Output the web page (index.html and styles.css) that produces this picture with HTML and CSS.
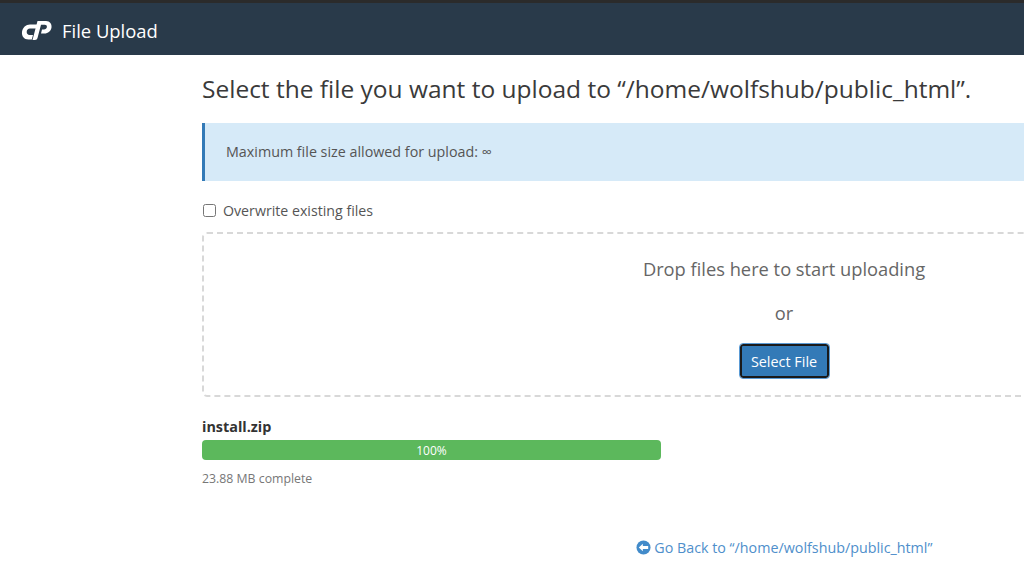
FILE: index.html
```html
<!DOCTYPE html>
<html lang="en">
<head>
  <meta charset="UTF-8">
  <title>File Upload</title>
  <link rel="stylesheet" href="styles.css">
</head>
<body>
  <header class="topbar">
    <svg class="logo" viewBox="0 0 31 21" width="31" height="21" aria-hidden="true">
      <path fill="#fff" d="M9 4.500H16.500L15.500 8.500H9C7 8.500 5.700 10 5.700 12C5.700 13.600 6.800 15 8.500 15H12L10.800 19.500H7.500C3 19.500.5 16 1 12C1.500 7.500 5 4.500 9 4.500Z"/>
      <path fill="#fff" d="M11.500 20 16.500 1H25C29 1 31 4 30.500 7.500C30 11 27 13.500 23.500 13.500H20L21 9.500H23C24.500 9.500 25.700 8.500 25.900 7C26.100 5.500 25 4.800 23.800 4.800H20L16.500 18C16.200 19.200 15.300 20 14 20Z"/>
    </svg>
    <span class="topbar-title">File Upload</span>
  </header>

  <main class="content">
    <h1>Select the file you want to upload to “/home/wolfshub/public_html”.</h1>

    <div class="alert">Maximum file size allowed for upload: ∞</div>

    <label class="overwrite">
      <input type="checkbox">
      Overwrite existing files
    </label>

    <div class="dropzone">
      <div class="drop-title">Drop files here to start uploading</div>
      <div class="drop-or">or</div>
      <button class="select-btn">Select File</button>
    </div>

    <div class="upload">
      <div class="upload-name">install.zip</div>
      <div class="progress">100%</div>
      <div class="upload-status">23.88 MB complete</div>
    </div>

    <div class="back">
      <a href="#">
        <svg viewBox="0 0 16 16" width="15" height="15" aria-hidden="true">
          <circle cx="8" cy="8" r="7.500" fill="#428bca"/>
          <path fill="#fff" d="M3 8l4.300-4v2.500H13v3H7.300V12Z"/>
        </svg>
        Go Back to “/home/wolfshub/public_html”
      </a>
    </div>
  </main>
</body>
</html>
```

FILE: styles.css
```css
* {
  box-sizing: border-box;
}

html, body {
  margin: 0;
  height: 576px;
  overflow: hidden;
}

body {
  font-family: "Open Sans", sans-serif;
  background: #fff;
  color: #333;
}

.topbar {
  height: 55px;
  background: #293a4a;
  border-top: 3px solid #2b2b2b;
  display: flex;
  align-items: center;
  padding: 3px 0 0 21px;
  gap: 10px;
}

.topbar-title {
  color: #fff;
  font-size: 18.4px;
}

.content {
  width: 1164px;
  margin-left: 202px;
}

h1 {
  margin: 0;
  padding-top: 17px;
  font-size: 24.5px;
  font-weight: 400;
  line-height: 34px;
  color: #3a3a3a;
  white-space: nowrap;
}

.alert {
  margin-top: 17px;
  height: 58px;
  background: #d6eaf8;
  border-left: 3px solid #337ab7;
  padding: 0 0 2px 21px;
  display: flex;
  align-items: center;
  font-size: 14.3px;
  color: #555;
}

.overwrite {
  margin-top: 19px;
  height: 20px;
  display: flex;
  align-items: center;
  gap: 7px;
  font-size: 14.2px;
  color: #555;
}

.overwrite input {
  margin: 1px 0 0 1px;
  width: 13px;
  height: 13px;
}

.dropzone {
  margin-top: 12px;
  height: 165px;
  border: 2px dashed #d8d8d8;
  border-radius: 5px;
  padding-top: 21px;
  display: flex;
  flex-direction: column;
  align-items: center;
  color: #666;
}

.drop-title {
  font-size: 18.3px;
  line-height: 28px;
}

.drop-or {
  margin-top: 16px;
  font-size: 18.3px;
  line-height: 28px;
}

.select-btn {
  margin-top: 17px;
  width: 89px;
  height: 34px;
  background: #337ab7;
  color: #fff;
  font-family: inherit;
  font-size: 14.4px;
  border: 2px solid #1a1a1a;
  border-radius: 3px;
  outline: 1px solid #5b9bd5;
  outline-offset: 0;
  padding: 0;
}

.upload {
  margin-top: 20px;
  width: 459px;
}

.upload-name {
  font-size: 14.4px;
  font-weight: 700;
  line-height: 20px;
}

.progress {
  margin-top: 3px;
  height: 20px;
  background: #5cb85c;
  border-radius: 4px;
  color: #fff;
  font-size: 12px;
  line-height: 21px;
  text-align: center;
}

.upload-status {
  margin-top: 10px;
  font-size: 12.3px;
  line-height: 17px;
  color: #777;
}

.back {
  margin-top: 51px;
  text-align: center;
  font-size: 14.3px;
}

.back a {
  color: #4f8fcb;
  text-decoration: none;
}

.back svg {
  vertical-align: -2px;
}
```
